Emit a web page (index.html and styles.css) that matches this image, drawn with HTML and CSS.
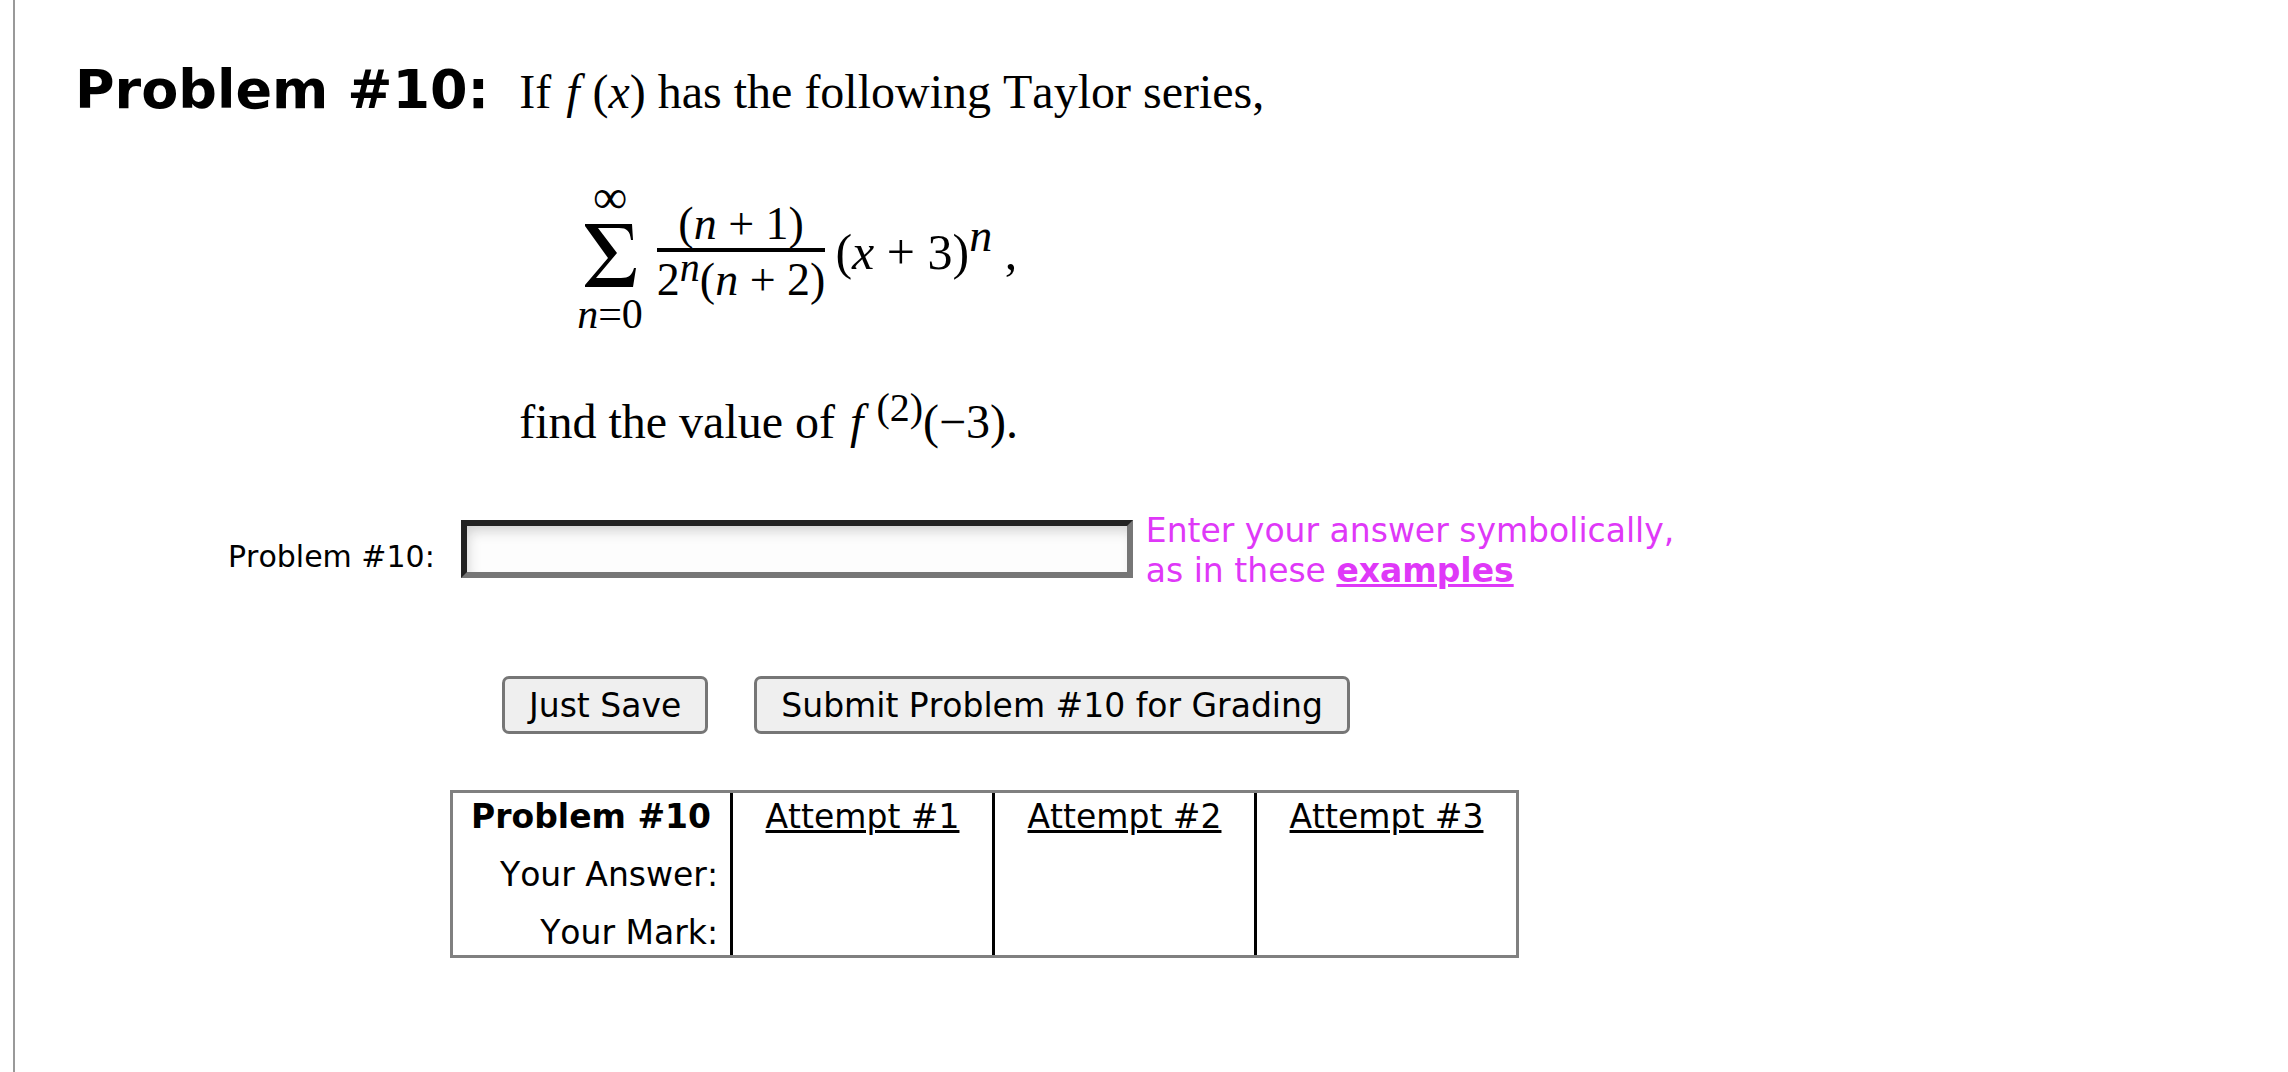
FILE: index.html
```html
<!DOCTYPE html>
<html lang="en">
<head>
  <meta charset="UTF-8">
  <meta content="width=device-width, initial-scale=1.0" name="viewport">
  <title>Problem #10</title>
  <link rel="stylesheet" href="styles.css">
</head>
<body>
<main class="page">

  <!-- question -->
  <section class="question">
    <h1 class="question-title">Problem #10:</h1>
    <div class="question-text">
      <p>If <i class="func">f</i>(<i>x</i>) has the following Taylor series,</p>

      <div class="series">
        <div class="sum">
          <span class="limit-top">&infin;</span>
          <svg class="sigma" viewBox="0 0 51 63" role="img" aria-label="sum">
            <path d="M0 0H47L48 16H46C45 7 42 4 34 4H13L32 29L11 54H36C44 54 47 51 49 44H51L48 63H0V61L23 34L0 2Z"/>
          </svg>
          <span class="limit-bottom"><i>n</i>=0</span>
        </div>
        <div class="fraction">
          <span class="numerator">(<i>n</i> + 1)</span>
          <span class="denominator">2<sup><i>n</i></sup>(<i>n</i> + 2)</span>
        </div>
        <div class="power">(<i>x</i> + 3)<sup><i>n</i></sup> ,</div>
      </div>

      <p>find the value of <i class="func">f</i><sup>(2)</sup>(&minus;3).</p>
    </div>
  </section>

  <form class="answer">
    <div class="answer-row">
      <label for="answer">Problem #10:</label>
      <input class="answer-input" id="answer" name="answer" type="text">
      <p class="hint">Enter your answer symbolically,<br>as in these <a href="#examples">examples</a></p>
    </div>
    <div class="buttons">
      <button class="btn" type="button">Just Save</button>
      <button class="btn" type="submit">Submit Problem #10 for Grading</button>
    </div>
  </form>

  <!-- previous attempts -->
  <table class="attempts">
    <thead>
      <tr>
        <th class="attempts-title" scope="col">Problem #10</th>
        <th scope="col">Attempt #1</th>
        <th scope="col">Attempt #2</th>
        <th scope="col">Attempt #3</th>
      </tr>
    </thead>
    <tbody>
      <tr class="attempts-answer">
        <th scope="row">Your Answer:</th>
        <td></td>
        <td></td>
        <td></td>
      </tr>
      <tr>
        <th scope="row">Your Mark:</th>
        <td></td>
        <td></td>
        <td></td>
      </tr>
    </tbody>
  </table>

</main>
</body>
</html>
```

FILE: styles.css
```css
:root{
  --sans: Verdana, "DejaVu Sans", sans-serif;
  --serif: "Liberation Serif", "Times New Roman", serif;
  --hint-color: #df38f8;
}

*{
  box-sizing: border-box;
}

body{
  margin: 0;
  background-color: #fff;
  color: #000;
  font-family: var(--sans);
  font-size: 33px;
  font-kerning: none;
}

p{
  margin: 0;
}

.page{
  min-height: 100vh;
  margin-left: 13px;
  padding: 58px 40px 56px 60px;
  border-left: 2px solid #999;
}

/* question */
.question{
  display: flex;
  align-items: baseline;
  gap: 30px;
}

.question-title{
  margin: 0;
  font-size: 54px;
  line-height: 64px;
  white-space: nowrap;
}

.question-text{
  font-family: var(--serif);
  font-size: 48px;
  line-height: 56px;
}

.func{
  margin: 0 13px 0 3px;
}

sup{
  font-size: 40px;
  line-height: 0;
}

.series{
  display: flex;
  align-items: center;
  margin: 47px 0 58px 58px;
}

.sum{
  display: flex;
  flex-direction: column;
  align-items: center;
  gap: 5px;
  padding-top: 8px;
  font-size: 42px;
  line-height: 44px;
}

.limit-top{
  font-size: 48px;
}

.sigma{
  width: 51px;
  height: 63px;
}

.fraction{
  display: flex;
  flex-direction: column;
  align-items: center;
  margin: 0 10px 0 14px;
  font-size: 46px;
  line-height: 48px;
}

.numerator{
  width: 100%;
  border-bottom: 4px solid #000;
  text-align: center;
}

.denominator{
  padding-top: 4px;
}

.denominator sup{
  vertical-align: 14px;
}

.power{
  font-size: 50px;
}

.power sup{
  font-size: 46px;
  vertical-align: 18px;
}

/* answer form */
.answer{
  margin-top: 61px;
}

.answer-row{
  display: flex;
  align-items: center;
  margin-left: 153px;
}

.answer-row label{
  font-size: 30px;
  margin-right: 26px;
  padding-top: 11px;
}

.answer-input{
  width: 672px;
  height: 58px;
  margin: 0 13px 4px 0;
  padding: 4px 8px;
  border: 6px solid;
  border-color: #222 #767676 #767676 #222;
  background-color: #fdfdfd;
  box-shadow: inset 4px 8px 14px -4px #ccc;
  font: inherit;
}

.hint{
  color: var(--hint-color);
  line-height: 40px;
}

.hint a{
  color: inherit;
  font-weight: bold;
  text-decoration-thickness: 3px;
}

.buttons{
  display: flex;
  gap: 46px;
  margin: 85px 0 56px 427px;
}

.btn{
  height: 58px;
  padding: 0 24px;
  border: 3px solid #767676;
  border-radius: 7px;
  background-color: #efefef;
  color: #000;
  font: inherit;
  font-kerning: none;
}

/* attempts table */
.attempts{
  margin-left: 375px;
  border: 3px solid #808080;
  border-spacing: 0;
}

.attempts th,
.attempts td{
  width: 262px;
  height: 46px;
  padding: 0;
  border-left: 3px solid #000;
  font-weight: normal;
}

.attempts thead th{
  text-decoration: underline 3px;
}

.attempts th:first-child{
  width: 277px;
  padding-right: 12px;
  border-left: none;
  text-align: right;
}

.attempts .attempts-title:first-child{
  padding-right: 19px;
  font-weight: bold;
  text-decoration: none;
}

.attempts .attempts-answer th{
  height: 70px;
}
```
